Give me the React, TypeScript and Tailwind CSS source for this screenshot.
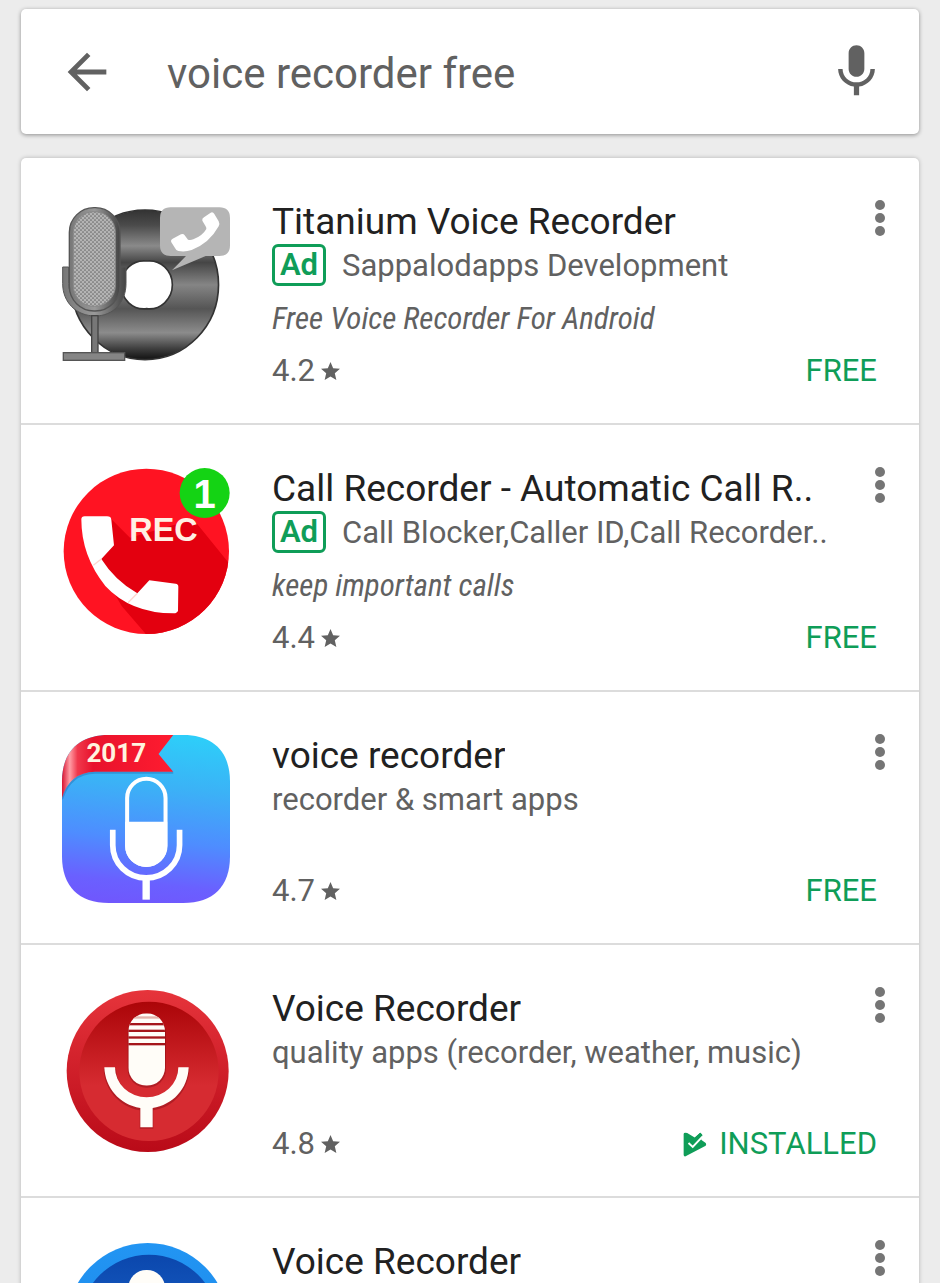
import type { ReactNode } from "react";

type App = {
  id: string;
  title: string;
  developer?: string;
  ad?: boolean;
  tagline?: string;
  rating?: string;
  status?: "FREE" | "INSTALLED";
  icon: ReactNode;
};

function TitaniumIcon() {
  return (
    <svg viewBox="36 18 504 504" className="size-full" aria-hidden="true">
      <defs>
        <linearGradient id="disc" x1="0" y1="0" x2="0" y2="1">
          <stop offset="0" stopColor="#333" />
          <stop offset="0.1" stopColor="#4a4a4a" />
          <stop offset="0.24" stopColor="#8a8a8a" />
          <stop offset="0.35" stopColor="#454545" />
          <stop offset="0.5" stopColor="#858585" />
          <stop offset="0.66" stopColor="#555" />
          <stop offset="0.82" stopColor="#8c8c8c" />
          <stop offset="0.93" stopColor="#3c3c3c" />
          <stop offset="1" stopColor="#111" />
        </linearGradient>
        <linearGradient id="steel" x1="0" y1="0" x2="1" y2="0">
          <stop offset="0" stopColor="#777" />
          <stop offset="0.5" stopColor="#999" />
          <stop offset="1" stopColor="#444" />
        </linearGradient>
        <pattern id="mesh" width="12" height="12" patternUnits="userSpaceOnUse">
          <rect width="12" height="12" fill="#b4b4b4" />
          <circle cx="3" cy="3" r="2.6" fill="#6c6c6c" />
          <circle cx="9" cy="9" r="2.6" fill="#6c6c6c" />
        </pattern>
      </defs>
      <path
        fillRule="evenodd"
        fill="url(#disc)"
        stroke="#333"
        strokeWidth="5"
        d="M285 45a220 224 0 1 1 0 449a220 224 0 1 1 0-449zM290 198a69 72 0 1 0 0 143a69 72 0 1 0 0-143z"
      />
      <path d="M38 216h18v50a77 77 0 0 0 154 0v-50h18v50c0 55-38 97-92 97c-58 0-98-42-98-97z" fill="url(#steel)" stroke="#555" strokeWidth="3" />
      <rect x="58" y="38" width="152" height="310" rx="74" fill="url(#steel)" stroke="#555" strokeWidth="4" />
      <rect x="70" y="50" width="126" height="284" rx="62" fill="url(#mesh)" stroke="#888" strokeWidth="3" />
      <rect x="125" y="362" width="19" height="112" fill="#777" stroke="#444" strokeWidth="4" />
      <rect x="40" y="473" width="184" height="23" fill="#858585" stroke="#555" strokeWidth="4" />
      <path d="M362 37h146q32 0 32 32v82q0 32-32 32h-41L366 226L408 183h-46q-32 0-32-32v-82q0-32 32-32z" fill="#b5b5b5" />
      <path
        d="M457 77Q455 71 462 67L482 53Q489 50 493 57L506 79Q510 86 506 94Q478 145 425 165Q405 172 385 168Q378 166 375 159L364 142Q361 135 368 131L393 118Q400 115 404 121L414 134Q421 137 430 133Q458 122 469 102Q470 97 466 92z"
        fill="#fff"
      />
    </svg>
  );
}

function CallIcon() {
  return (
    <svg viewBox="36 36 504 504" className="size-full" aria-hidden="true">
      <defs>
        <clipPath id="callDisc">
          <circle cx="289" cy="286" r="248" />
        </clipPath>
      </defs>
      <g clipPath="url(#callDisc)">
        <rect x="36" y="36" width="504" height="504" fill="#ff1322" />
        <path d="M183 188L240 245L430 190L560 350V560H310L215 450L140 320z" fill="#e3000f" />
      </g>
      <path
        d="M94 190Q94 181 104 181H171Q183 181 184 191L192 268L154 309Q195 374 262 412L298 373L377 383Q385 384 385 392L384 464Q382 471 371 472Q242 472 166 390Q94 300 94 190z"
        fill="#fff"
      />
      <path d="M154 309L130 328M262 412L234 440" stroke="#ffd6d0" strokeWidth="4" />
      <text x="238" y="254" fontSize="97" fill="#fff0e4" className="font-['Liberation_Sans',sans-serif] font-bold">
        REC
      </text>
      <circle cx="464" cy="111" r="75" fill="#14d314" />
      <text x="464" y="155" fontSize="120" textAnchor="middle" fill="#fff" className="font-['Liberation_Sans',sans-serif] font-bold">
        1
      </text>
    </svg>
  );
}

function RibbonMicIcon() {
  return (
    <svg viewBox="37 28 503 503" className="size-full" aria-hidden="true">
      <defs>
        <linearGradient id="sky" x1="0.55" y1="0" x2="0.45" y2="1">
          <stop offset="0" stopColor="#2ecdf9" />
          <stop offset="0.3" stopColor="#3bb2f6" />
          <stop offset="0.62" stopColor="#4e8dff" />
          <stop offset="0.88" stopColor="#6a60ff" />
          <stop offset="1" stopColor="#6f58fd" />
        </linearGradient>
        <linearGradient id="ribbon" x1="0" y1="0" x2="1" y2="0">
          <stop offset="0" stopColor="#d81331" />
          <stop offset="0.07" stopColor="#ff9da5" />
          <stop offset="0.14" stopColor="#f0384c" />
          <stop offset="0.28" stopColor="#e8122c" />
          <stop offset="1" stopColor="#ff1c30" />
        </linearGradient>
        <clipPath id="tile">
          <path d="M177 28H400C490 28 540 78 540 168V391C540 481 490 531 400 531H177C87 531 37 481 37 391V168C37 78 87 28 177 28z" />
        </clipPath>
      </defs>
      <g clipPath="url(#tile)">
        <rect x="37" y="28" width="503" height="503" fill="url(#sky)" />
        <path d="M37 220Q62 142 136 141H370" fill="none" stroke="#2874b8" strokeOpacity="0.5" strokeWidth="6" />
        <path d="M37 28H370L326 85L370 138H136Q60 140 37 216z" fill="url(#ribbon)" />
      </g>
      <text x="110" y="109" fontSize="78" fill="#fff3df" className="font-[Roboto,sans-serif] font-bold">
        2017
      </text>
      <path d="M226 288H352V360A63 63 0 0 1 226 360z" fill="#fff" />
      <rect x="232" y="159" width="115" height="258" rx="57.5" fill="none" stroke="#fff" strokeWidth="12" />
      <path d="M189 312V358A100 98 0 0 0 389 358V312" fill="none" stroke="#fff" strokeWidth="17" />
      <rect x="278" y="455" width="22" height="66" fill="#fff" />
    </svg>
  );
}

type DiscProps = { id: string; rim: [string, string]; face: [string, string]; top: number; stripes: string[] };

function DiscMicIcon({ id, rim, face, top, stripes }: DiscProps) {
  return (
    <svg viewBox="36 27 504 504" className="size-full" aria-hidden="true">
      <defs>
        <linearGradient id={`${id}Rim`} x1="0" y1="0" x2="0" y2="1">
          <stop offset="0" stopColor={rim[0]} />
          <stop offset="1" stopColor={rim[1]} />
        </linearGradient>
        <linearGradient id={`${id}Face`} x1="0" y1="0" x2="0" y2="1">
          <stop offset="0" stopColor={face[0]} />
          <stop offset="0.6" stopColor={face[1]} />
          <stop offset="1" stopColor={face[1]} />
        </linearGradient>
        <clipPath id={`${id}Capsule`}>
          <rect x="235" y={top} width="110" height={320 - top} rx="54" />
        </clipPath>
      </defs>
      <circle cx="293" cy="276" r="243" fill={`url(#${id}Rim)`} />
      <circle cx="297" cy="277" r="209" fill={`url(#${id}Face)`} />
      <g fill="#5d0008" opacity="0.3">
        <rect x="233" y={top + 5} width="115" height={321 - top} rx="56" />
        <path d="M161 270H198A92 86 0 0 0 384 270H418C416 335 370 385 310 394V449H269V394C205 382 163 330 161 270z" />
      </g>
      <g clipPath={`url(#${id}Capsule)`}>
        <rect x="235" y={top} width="110" height={320 - top} fill="#fffdf8" />
        {stripes.map((color, i) => (
          <rect key={i} x="234" y={112 + i * 20} width="112" height="7" fill={color} />
        ))}
      </g>
      <path d="M163 265H195A95 90 0 0 0 385 265H416C414 330 368 378 308 387V445H271V387C207 377 165 325 163 265z" fill="#fffdf8" />
    </svg>
  );
}

function BackArrow() {
  return (
    <svg viewBox="0 0 24 24" className="size-[58px]" fill="currentColor" aria-hidden="true">
      <path d="M20 11H7.83l5.59-5.59L12 4l-8 8 8 8 1.41-1.41L7.83 13H20v-2z" />
    </svg>
  );
}

function MicGlyph() {
  return (
    <svg viewBox="0 0 24 24" className="size-[63px]" fill="currentColor" aria-hidden="true">
      <path d="M12 14c1.66 0 2.99-1.34 2.99-3L15 5c0-1.66-1.34-3-3-3S9 3.34 9 5v6c0 1.66 1.34 3 3 3zm5.3-3c0 3-2.54 5.1-5.3 5.1S6.7 14 6.7 11H5c0 3.41 2.72 6.23 6 6.72V21h2v-3.28c3.28-.48 6-3.3 6-6.72h-1.7z" />
    </svg>
  );
}

function Star() {
  return (
    <svg viewBox="2 2 20 19" className="h-[18px] w-[19px]" fill="currentColor" aria-hidden="true">
      <path d="M12 17.27L18.18 21l-1.64-7.03L22 9.24l-7.19-.61L12 2 9.19 8.63 2 9.24l5.46 4.73L5.82 21z" />
    </svg>
  );
}

function InstalledBadge() {
  return (
    <svg viewBox="67 60 74 77" className="h-[25px] w-[24px]" aria-hidden="true">
      <path d="M69 66Q69 62 74 62L80 63L103 77L120 62L127 69L123 84L137 94Q140 98 137 102L75 135Q69 136 69 130z" fill="#0f9d58" />
      <path d="M84 94L97 106L127 74" fill="none" stroke="#fff" strokeWidth="6" />
      <path d="M99 82L120 62L126 68L102 91z" fill="#0f9d58" />
    </svg>
  );
}

const apps: App[] = [
  {
    id: "titanium",
    title: "Titanium Voice Recorder",
    developer: "Sappalodapps Development",
    ad: true,
    tagline: "Free Voice Recorder For Android",
    rating: "4.2",
    status: "FREE",
    icon: <TitaniumIcon />,
  },
  {
    id: "call",
    title: "Call Recorder - Automatic Call R..",
    developer: "Call Blocker,Caller ID,Call Recorder..",
    ad: true,
    tagline: "keep important calls",
    rating: "4.4",
    status: "FREE",
    icon: <CallIcon />,
  },
  {
    id: "smart",
    title: "voice recorder",
    developer: "recorder & smart apps",
    rating: "4.7",
    status: "FREE",
    icon: <RibbonMicIcon />,
  },
  {
    id: "quality",
    title: "Voice Recorder",
    developer: "quality apps (recorder, weather, music)",
    rating: "4.8",
    status: "INSTALLED",
    icon: (
      <DiscMicIcon
        id="red"
        rim={["#e6343b", "#b90a18"]}
        face={["#ab0508", "#d62b31"]}
        top={103}
        stripes={["#e3b3ac", "#a5161b", "#a5161b", "#a5161b", "#a5161b"]}
      />
    ),
  },
  {
    id: "blue",
    title: "Voice Recorder",
    icon: <DiscMicIcon id="blue" rim={["#2295f3", "#1c84e6"]} face={["#0b47ad", "#1a62c8"]} top={114} stripes={[]} />,
  },
];

function AppRow({ app }: { app: App }) {
  return (
    <li className="flex gap-[42px] border-b-2 border-[#dcdcdc] pt-[42px] pr-[21px] pb-[30px] pl-[41px] last:border-b-0">
      <div className="mt-px size-[168px] shrink-0">{app.icon}</div>
      <div className="flex min-h-[179px] min-w-0 flex-1 flex-col">
        <div className="flex items-start justify-between">
          <h2 className="min-w-0 truncate text-[37px] leading-[44px] text-[#212121]">{app.title}</h2>
          <button type="button" aria-label="More options" className="flex h-[36px] w-[36px] shrink-0 flex-col items-center justify-center gap-[3px]">
            <span className="size-[10px] rounded-full bg-[#757575]" />
            <span className="size-[10px] rounded-full bg-[#757575]" />
            <span className="size-[10px] rounded-full bg-[#757575]" />
          </button>
        </div>
        {app.developer && (
          <div className="flex h-[44px] items-start gap-4 pr-[21px]">
            {app.ad && (
              <span className="flex h-[42px] w-[54px] shrink-0 items-center justify-center rounded-[6px] border-[3px] border-[#0f9d58] text-[31px] font-semibold text-[#0f9d58]">
                Ad
              </span>
            )}
            <span className="truncate leading-[44px]">{app.developer}</span>
          </div>
        )}
        {app.tagline && (
          <p className="mt-[9px] mb-2 font-['Roboto_Condensed','Roboto',sans-serif] leading-[44px] italic">{app.tagline}</p>
        )}
        {app.rating && (
          <div className="mt-auto flex items-center justify-between pr-[21px] leading-[44px]">
            <span className="flex items-center gap-[6px]">
              {app.rating}
              <Star />
            </span>
            <span className="flex items-center gap-3 text-[#0f9d58]">
              {app.status === "INSTALLED" && <InstalledBadge />}
              {app.status}
            </span>
          </div>
        )}
      </div>
    </li>
  );
}

export default function App() {
  return (
    <div className="flex h-screen flex-col gap-6 overflow-hidden bg-[#ececec] px-[21px] pt-[9px] font-[Roboto,sans-serif] text-[31px] text-[#616161]">
      <header className="flex shrink-0 items-center rounded-[5px] bg-white py-[31px] pr-[31px] pl-[37px] shadow-[0_1px_4px_rgba(0,0,0,0.4)]">
        <button type="button" aria-label="Back">
          <BackArrow />
        </button>
        <input
          type="text"
          aria-label="Search apps"
          defaultValue="voice recorder free"
          className="ml-[51px] min-w-0 flex-1 bg-transparent pt-[5px] text-[42px] leading-[58px] outline-none"
        />
        <button type="button" aria-label="Voice search">
          <MicGlyph />
        </button>
      </header>
      <main className="shrink-0 rounded-t-[5px] bg-white shadow-[0_0_4px_rgba(0,0,0,0.25)]">
        <ul>
          {apps.map((app) => (
            <AppRow key={app.id} app={app} />
          ))}
        </ul>
      </main>
    </div>
  );
}
